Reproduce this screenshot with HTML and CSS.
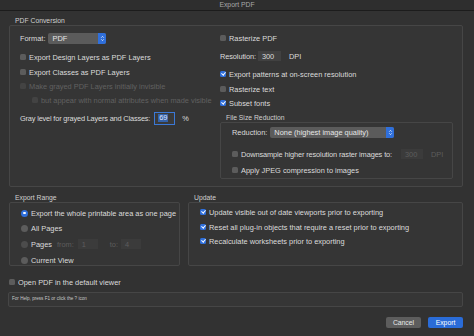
FILE: index.html
```html
<!DOCTYPE html>
<html>
<head>
<meta charset="utf-8">
<link rel="stylesheet" href="styles.css">
</head>
<body>
<div class="window">
  <div class="titlebar">Export PDF</div>
  <div class="main">
    <div class="group-title gt-conv">PDF Conversion</div>
    <div class="box conv">
      <div class="col-left">
        <div class="row r-format">
          <span class="lbl">Format:</span>
          <span class="select sel-format"><span class="sel-text">PDF</span><span class="stepper"><svg viewBox="0 0 6 8" width="5" height="7"><path d="M1.5 3 L3 1.5 L4.5 3 M1.5 5 L3 6.5 L4.5 5" fill="none" stroke="#fff" stroke-width="0.9"/></svg></span></span>
        </div>
        <div class="row r-l1"><span class="cb"></span><span>Export Design Layers as PDF Layers</span></div>
        <div class="row r-l2"><span class="cb"></span><span>Export Classes as PDF Layers</span></div>
        <div class="row r-l3 disabled"><span class="cb"></span><span>Make grayed PDF Layers initially invisible</span></div>
        <div class="row r-l4 disabled indent"><span class="cb"></span><span>but appear with normal attributes when made visible</span></div>
        <div class="row r-gray">
          <span class="lbl gray-lbl">Gray level for grayed Layers and Classes:</span>
          <span class="input focus"><span class="sel-hl">69</span></span>
          <span class="pct">%</span>
        </div>
      </div>
      <div class="col-right">
        <div class="row r-r1"><span class="cb"></span><span>Rasterize PDF</span></div>
        <div class="row r-r2"><span class="lbl res-lbl">Resolution:</span><span class="input res">300</span><span class="dpi">DPI</span></div>
        <div class="row r-r3"><span class="cb on"></span><span>Export patterns at on-screen resolution</span></div>
        <div class="row r-r4"><span class="cb"></span><span>Rasterize text</span></div>
        <div class="row r-r5"><span class="cb on"></span><span>Subset fonts</span></div>
        <div class="group-title gt-fsr">File Size Reduction</div>
        <div class="box fsr">
          <div class="row r-red">
            <span class="lbl">Reduction:</span>
            <span class="select sel-red"><span class="sel-text">None (highest image quality)</span><span class="stepper"><svg viewBox="0 0 6 8" width="5" height="7"><path d="M1.5 3 L3 1.5 L4.5 3 M1.5 5 L3 6.5 L4.5 5" fill="none" stroke="#fff" stroke-width="0.9"/></svg></span></span>
          </div>
          <div class="row r-down"><span class="cb"></span><span class="down-text">Downsample higher resolution raster images to:</span><span class="input dis ds">300</span><span class="dpi dis-text">DPI</span></div>
          <div class="row r-jpeg"><span class="cb"></span><span>Apply JPEG compression to images</span></div>
        </div>
      </div>
    </div>

    <div class="lower">
      <div class="lower-col range-col">
        <div class="group-title">Export Range</div>
        <div class="box range">
          <div class="row rr1"><span class="radio on"></span><span>Export the whole printable area as one page</span></div>
          <div class="row rr2"><span class="radio"></span><span>All Pages</span></div>
          <div class="row rr3"><span class="radio"></span><span>Pages</span><span class="dis-text from">from:</span><span class="input dis pg">1</span><span class="dis-text to">to:</span><span class="input dis pg">4</span></div>
          <div class="row rr4"><span class="radio"></span><span>Current View</span></div>
        </div>
      </div>
      <div class="lower-col update-col">
        <div class="group-title">Update</div>
        <div class="box update">
          <div class="row ur1"><span class="cb on"></span><span>Update visible out of date viewports prior to exporting</span></div>
          <div class="row ur2"><span class="cb on"></span><span>Reset all plug-in objects that require a reset prior to exporting</span></div>
          <div class="row ur3"><span class="cb on"></span><span>Recalculate worksheets prior to exporting</span></div>
        </div>
      </div>
    </div>

    <div class="row open-row"><span class="cb"></span><span>Open PDF in the default viewer</span></div>
    <div class="help">For Help, press F1 or click the ? icon</div>
    <div class="buttons">
      <span class="btn cancel">Cancel</span>
      <span class="btn export">Export</span>
    </div>
  </div>
</div>
</body>
</html>
```

FILE: styles.css
```css
* { box-sizing: border-box; }
html, body { margin: 0; padding: 0; }
body {
  width: 474px;
  height: 336px;
  overflow: hidden;
  background: #323232;
  font-family: "Liberation Sans", Arial, sans-serif;
  font-size: 7.4px;
  color: #dcdcdc;
}
.window { width: 474px; height: 336px; display: flex; flex-direction: column; }
.titlebar {
  height: 11px;
  background: #2e2e2e;
  border-bottom: 1px solid #1c1c1c;
  color: #a8a8a8;
  font-size: 6.8px;
  text-align: center;
  line-height: 10px;
}
.main { padding: 0 11px 0 9px; display: flex; flex-direction: column; }
.group-title { font-size: 6.8px; color: #d0d0d0; height: 9px; line-height: 9px; padding-left: 6px; }
.gt-conv { margin-top: 5px; }
.box {
  border: 1px solid #464646;
  background: #353535;
  border-radius: 2px;
}
.conv { height: 162px; display: flex; }
.col-left { width: 210px; padding-left: 10px; }
.col-right { flex: 1; padding-right: 10px; }
.row { display: flex; align-items: center; white-space: nowrap; }
.cb {
  width: 6px; height: 6px; border-radius: 1.5px; background: #5c5c5c;
  margin-right: 3px; flex: none; position: relative;
}
.cb.on { background: #2f6fdb; }
.cb.on::after {
  content: ""; position: absolute; left: 1.6px; top: 0.4px;
  width: 1.6px; height: 3.2px; border: solid #fff; border-width: 0 1.1px 1.1px 0;
  transform: rotate(40deg);
}
.disabled { color: #616161; }
.disabled .cb { background: #434343; }
.indent { padding-left: 12px; }
.lbl { margin-right: 3px; }
.gray-lbl { letter-spacing: -0.18px; margin-right: 3px; }
.res-lbl { letter-spacing: -0.1px; margin-right: 2px; }
.select {
  display: flex; align-items: center; height: 11px; background: #5b5b5b; border-radius: 2px;
  color: #e6e6e6; position: relative;
}
.sel-text { flex: 1; padding-left: 4px; }
.stepper {
  width: 8px; height: 11px; background: #2f6fdb; border-radius: 0 2px 2px 0;
  display: flex; align-items: center; justify-content: center;
}
.sel-format { width: 58px; }
.r-format { margin-top: 6px; height: 12px; }
.r-l1 { margin-top: 7px; height: 12px; }
.r-l2 { margin-top: 3px; height: 12px; }
.r-l3 { margin-top: 2px; height: 12px; }
.r-l4 { margin-top: 2px; height: 12px; }
.r-gray { margin-top: 5px; height: 14px; }
.input {
  display: inline-flex; align-items: center; height: 10px; background: #414141;
  padding-left: 4px; color: #dcdcdc;
}
.input.focus {
  width: 21px; height: 13px; border: 1.5px solid #3b78d6; background: #3a3a3a;
  padding-left: 3px; margin-left: 1px;
}
.sel-hl { background: #3562a8; color: #e0e8ff; padding: 0 1px; line-height: 8px; }
.pct { margin-left: 7px; }
.r-r1 { margin-top: 6px; height: 12px; }
.r-r2 { margin-top: 6px; height: 12px; }
.res { width: 23px; }
.dpi { margin-left: 8px; }
.r-r3 { margin-top: 6px; height: 12px; }
.r-r4 { margin-top: 3px; height: 12px; }
.r-r5 { margin-top: 2px; height: 12px; }
.gt-fsr { margin-top: 4px; padding-left: 6px; }
.fsr { height: 57px; margin-right: -1px; padding-left: 11px; margin-top: 0; }
.sel-red { width: 124px; }
.r-red { margin-top: 3px; height: 12px; }
.r-down { margin-top: 10px; height: 12px; }
.down-text { letter-spacing: -0.12px; margin-right: 9px; }
.ds { width: 22px; color: #5d5d5d; background: #3b3b3b; }
.dis-text { color: #5d5d5d; }
.r-down .dpi { margin-left: 8px; }
.r-jpeg { margin-top: 4px; height: 12px; }

.lower { display: flex; gap: 8px; margin-top: 6px; }
.range-col { width: 171px; }
.update-col { flex: 1; }
.range, .update { height: 64px; }
.range { padding-left: 11px; }
.radio {
  width: 7px; height: 7px; border-radius: 50%; background: #5c5c5c; margin-right: 3px;
  flex: none; position: relative;
}
.radio.on { background: #2f6fdb; }
.radio.on::after {
  content: ""; position: absolute; left: 2.2px; top: 2.2px; width: 2.6px; height: 2.6px;
  border-radius: 50%; background: #fff;
}
.rr1 { margin-top: 4px; height: 12px; }
.rr2 { margin-top: 3px; height: 12px; }
.rr3 { margin-top: 4px; height: 12px; }
.rr4 { margin-top: 4px; height: 12px; }
.rr3 .radio { background: #4c4c4c; }
.from { margin-left: 5px; margin-right: 4px; }
.to { margin-left: 12px; margin-right: 3px; }
.pg { width: 20px; color: #5d5d5d; background: #3b3b3b; }
.update { padding-left: 11px; }
.ur1 { margin-top: 3px; height: 12px; }
.ur2 { margin-top: 3px; height: 12px; }
.ur3 { margin-top: 2px; height: 12px; }

.open-row { margin-top: 10px; height: 12px; }
.help {
  margin-top: 4px; margin-left: -1px; height: 15px; border: 1px solid #464646; border-radius: 2px;
  background: #363636; font-size: 4.6px; color: #c8c8c8; line-height: 12px; padding-left: 3px;
}
.buttons { display: flex; justify-content: flex-end; gap: 7px; margin-top: 10px; }
.btn {
  height: 11px; line-height: 11px; text-align: center; border-radius: 2px; color: #e8e8e8;
  font-size: 6.8px;
}
.cancel { width: 35px; background: #5d5d5d; }
.export { width: 35px; background: #2a6cd8; color: #fff; }
```
